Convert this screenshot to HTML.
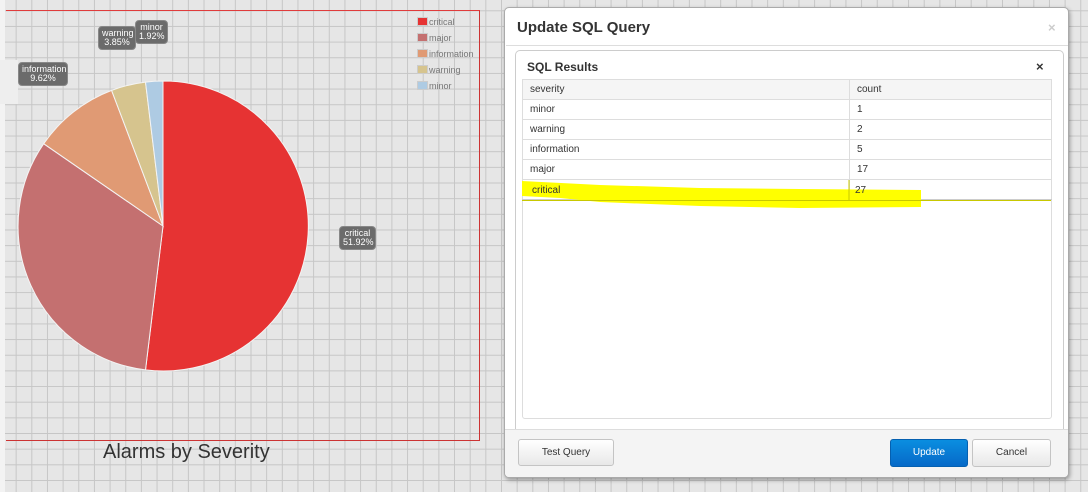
<!DOCTYPE html>
<html><head><meta charset="utf-8"><style>
*{margin:0;padding:0;box-sizing:border-box}
body{width:1088px;height:492px;overflow:hidden;position:relative;font-family:"Liberation Sans",Arial,sans-serif;
background-color:#e6e6e6;
background-image:linear-gradient(to right,#c6c6c6 1px,transparent 1px),linear-gradient(to bottom,#c6c6c6 1px,transparent 1px);
background-size:15.67px 15.67px;background-position:0px 10.3px}
.a{position:absolute}
.lbl{position:absolute;background:#6b6b6b;color:#fff;font-size:9px;line-height:9px;text-align:center;border-radius:4px;padding:2px 3px;border:1px solid #888}
.leg{position:absolute;left:417px;font-size:9px;color:#777}
.leg i{display:inline-block;width:11px;height:9px;border:1px solid #ccc;vertical-align:-1px;margin-right:1px}
td{border:1px solid #ddd;font-size:10px;color:#333;height:20px;padding:0 7px}
.btn{position:absolute;font-size:10px;text-align:center;border:1px solid #c4c4c4;border-radius:3px;background:linear-gradient(#fff,#e8e8e8);color:#333}
</style></head><body>
<div class="a" style="left:0;top:0;width:5px;height:492px;background:#f3f3f3"></div>
<div class="a" style="left:0;top:60px;width:18px;height:44px;background:#eeeeee"></div>
<div class="a" style="left:6px;top:10px;width:474px;height:431px;border-top:1px solid #e03c3c;border-right:1px solid #c33;border-bottom:1px solid #c33"></div>
<svg class="a" style="left:0;top:0" width="480" height="440">
<g stroke="#f4f4f4" stroke-width="1">
<path d="M163 226 L163 81 A145 145 0 1 1 145.5 369.9 Z" fill="#e63333"/>
<path d="M163 226 L145.5 369.9 A145 145 0 0 1 43.7 143.7 Z" fill="#c47070"/>
<path d="M163 226 L43.7 143.7 A145 145 0 0 1 111.6 90.4 Z" fill="#e09a74"/>
<path d="M163 226 L111.6 90.4 A145 145 0 0 1 145.5 82.1 Z" fill="#d6c48e"/>
<path d="M163 226 L145.5 82.1 A145 145 0 0 1 163 81 Z" fill="#aecbe3"/>
</g></svg>
<div class="lbl" style="left:18px;top:62px;width:50px">information<br>9.62%</div>
<div class="lbl" style="left:98px;top:26px;width:38px">warning<br>3.85%</div>
<div class="lbl" style="left:135px;top:20px;width:33px">minor<br>1.92%</div>
<div class="lbl" style="left:339px;top:226px;width:37px">critical<br>51.92%</div>
<div class="leg" style="top:17px"><i style="background:#e63333"></i>critical</div>
<div class="leg" style="top:33px"><i style="background:#c47070"></i>major</div>
<div class="leg" style="top:49px"><i style="background:#e09a74"></i>information</div>
<div class="leg" style="top:65px"><i style="background:#d6c48e"></i>warning</div>
<div class="leg" style="top:81px"><i style="background:#aecbe3"></i>minor</div>
<div class="a" style="left:103px;top:441px;font-size:20px;color:#333">Alarms by Severity</div>

<div class="a" style="left:504px;top:7px;width:565px;height:471px;background:#fff;border:1px solid #aaa;border-radius:5px;box-shadow:1px 2px 4px rgba(0,0,0,.35);overflow:hidden">
 <div class="a" style="left:12px;top:11px;font-size:15px;font-weight:bold;color:#333">Update SQL Query</div>
 <div class="a" style="left:543px;top:12px;font-size:13px;color:#ccc;font-weight:bold">×</div>
 <div class="a" style="left:1px;top:37px;width:562px;height:1px;background:#ddd"></div>
 <div class="a" style="left:10px;top:42px;width:549px;height:390px;border:1px solid #ccc;border-bottom:none;border-radius:5px 5px 0 0"></div>
 <div class="a" style="left:22px;top:52px;font-size:12px;font-weight:bold;color:#333">SQL Results</div>
 <div class="a" style="left:531px;top:51px;font-size:13px;font-weight:bold;color:#333">×</div>
 <div class="a" style="left:17px;top:71px;width:530px;height:340px;border:1px solid #ddd;border-radius:3px"></div>
 <table class="a" style="left:17px;top:71px;width:530px;border-collapse:collapse">
  <tr style="background:#f5f5f5"><td style="width:327px">severity</td><td>count</td></tr>
  <tr><td>minor</td><td>1</td></tr>
  <tr><td>warning</td><td>2</td></tr>
  <tr><td>information</td><td>5</td></tr>
  <tr><td>major</td><td>17</td></tr>
  <tr><td style="border-bottom-color:#ccc">&nbsp;</td><td style="border-bottom-color:#ccc">&nbsp;</td></tr>
 </table>
 <div class="a" style="left:0;top:421px;width:565px;height:50px;background:#f4f4f4;border-top:1px solid #ddd"></div>
 <div class="btn" style="left:13px;top:431px;width:96px;height:27px;line-height:25px">Test Query</div>
 <div class="btn" style="left:385px;top:431px;width:78px;height:28px;line-height:26px;background:linear-gradient(#0a8ee0,#0669c8);border-color:#0560b0;color:#fff">Update</div>
 <div class="btn" style="left:467px;top:431px;width:79px;height:28px;line-height:26px">Cancel</div>
</div>
<svg class="a" style="left:0;top:0" width="1088" height="492"><path d="M522 181 L600 185 L700 188 L800 189 L921 190 L921 207 L800 208 L700 206 L600 202 L560 198 L522 196 Z" fill="#ffff00"/>
<line x1="849" y1="180" x2="849" y2="200" stroke="#c8c800"/><line x1="522" y1="200.5" x2="1051" y2="200.5" stroke="#c8c800"/></svg>
<div class="a" style="left:532px;top:185px;font-size:10px;color:#333">critical</div>
<div class="a" style="left:855px;top:185px;font-size:10px;color:#333">27</div>
</body></html>
